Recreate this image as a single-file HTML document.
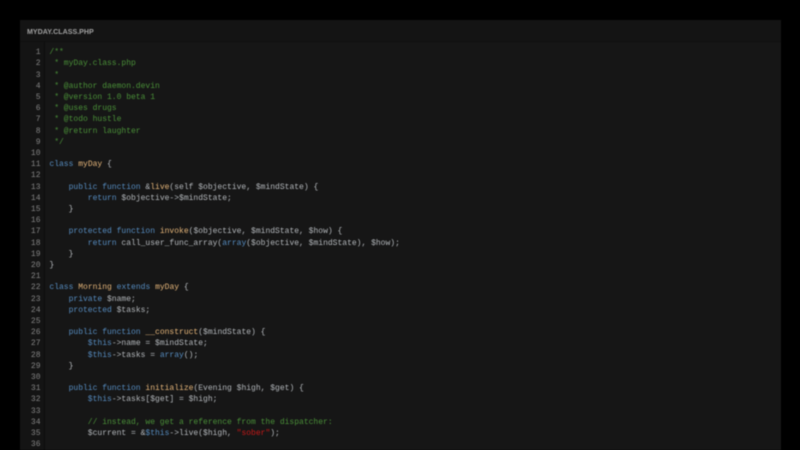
<!DOCTYPE html>
<html>
<head>
<meta charset="utf-8">
<style>
html,body{margin:0;padding:0;width:800px;height:450px;background:#000;overflow:hidden}
#panel{position:absolute;left:20px;top:20px;width:761px;height:430px;background:#161616;overflow:hidden;filter:blur(.4px)}
#head{position:absolute;left:0;top:0;width:100%;height:22px;background:#141414;border-bottom:1px solid #0f0f0f;box-sizing:border-box;}
#title{position:absolute;left:7px;top:.5px;font:bold 7.1px/22px "Liberation Sans",sans-serif;color:#a0a0a0}
#gut{position:absolute;left:0;top:22px;width:24px;height:408px;background:#141414;border-right:1px solid #0c0c0c}
.c{position:absolute;margin:0;font:8px/11.2px "Liberation Mono",monospace;white-space:pre;color:#b4b8bc}
#nums{left:0;top:27.1px;width:20.5px;text-align:right;color:#848484}
#code{left:29.4px;top:27.1px}
i{font-style:normal}
.g{color:#4a9038}.k{color:#568cc0}.f{color:#e6b67a}.s{color:#c81818}
</style>
</head>
<body>
<div id="panel">
<div id="head"></div>
<div id="title">MYDAY.CLASS.PHP</div>
<div id="gut"></div>
<pre class="c" id="nums">1
2
3
4
5
6
7
8
9
10
11
12
13
14
15
16
17
18
19
20
21
22
23
24
25
26
27
28
29
30
31
32
33
34
35
36</pre>
<pre class="c" id="code"><i class="g">/**
 * myDay.class.php
 *
 * @author daemon.devin
 * @version 1.0 beta 1
 * @uses drugs
 * @todo hustle
 * @return laughter
 */</i>

<i class="k">class</i> <i class="f">myDay</i> {

    <i class="k">public function</i> &amp;<i class="f">live</i>(self $objective, $mindState) {
        <i class="k">return</i> $objective-&gt;$mindState;
    }

    <i class="k">protected function</i> <i class="f">invoke</i>($objective, $mindState, $how) {
        <i class="k">return</i> call_user_func_array(<i class="k">array</i>($objective, $mindState), $how);
    }
}

<i class="k">class</i> <i class="f">Morning</i> <i class="k">extends</i> <i class="f">myDay</i> {
    <i class="k">private</i> $name;
    <i class="k">protected</i> $tasks;

    <i class="k">public function</i> <i class="f">__construct</i>($mindState) {
        <i class="k">$this</i>-&gt;name = $mindState;
        <i class="k">$this</i>-&gt;tasks = <i class="k">array</i>();
    }

    <i class="k">public function</i> <i class="f">initialize</i>(Evening $high, $get) {
        <i class="k">$this</i>-&gt;tasks[$get] = $high;

        <i class="g">// instead, we get a reference from the dispatcher:</i>
        $current = &amp;<i class="k">$this</i>-&gt;live($high, <i class="s">"sober"</i>);
</pre>
</div>
</body>
</html>
